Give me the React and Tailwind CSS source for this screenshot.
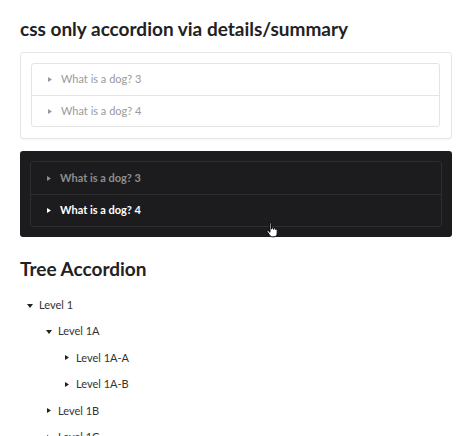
const Tri = ({ open, className }) => (
  <svg width="6" height="7" viewBox="0 0 6 7" className={className}>
    {open ? <path d="M0 2 L6 2 L3 6 Z" fill="currentColor" /> : <path d="M1 1 L5 3.5 L1 6 Z" fill="currentColor" />}
  </svg>
);

const Item = ({ label, dark, active, first }) => (
  <div
    className={`flex items-center pl-[15px] ${dark ? 'h-[32px]' : 'h-[31px]'} ${first ? '' : 'border-t'} ${
      dark ? 'border-[#2e2e31]' : 'border-[#e4e4e4]'
    }`}
  >
    <Tri
      className={`mr-[8px] ${dark ? (active ? 'text-white' : 'text-[#8d8d8d]') : 'text-[#9a9a9a]'}`}
    />
    <span
      className={`text-[11px] ${
        dark ? (active ? 'text-white font-bold' : 'text-[#8d8d8d] font-bold') : 'text-[#9a9a9a]'
      }`}
    >
      {label}
    </span>
  </div>
);

const TreeRow = ({ label, open, indent }) => (
  <div className={`flex items-center h-[26.4px] ${indent}`}>
    <Tri open={open} className="mr-[6px] text-[#222]" />
    <span className="text-[11px] text-[#333]">{label}</span>
  </div>
);

export default function App() {
  return (
    <div className="relative h-[436px] overflow-hidden bg-white pl-5 pr-[22px] pt-[16px] font-['Lato','Liberation_Sans',sans-serif]">
      <h1 className="text-[19px] font-bold text-[#222] leading-[26px]">css only accordion via details/summary</h1>

      {/* light theme accordion */}
      <div className="mt-[10px] border border-[#e6e6e6] rounded-[3px] p-[10px] pb-[11px] shadow-[0_1px_2px_rgba(0,0,0,0.04)]">
        <div className="border border-[#e4e4e4] rounded-[3px] mr-[1px]">
          <Item label="What is a dog? 3" first />
          <Item label="What is a dog? 4" />
        </div>
      </div>

      {/* dark theme accordion */}
      <div className="mt-[12px] bg-[#1c1c1e] rounded-[3px] p-[10px]">
        <div className="border border-[#2e2e31] rounded-[3px]">
          <Item label="What is a dog? 3" dark first />
          <Item label="What is a dog? 4" dark active />
        </div>
      </div>

      <h2 className="mt-[19px] text-[19px] font-bold text-[#222] leading-[26px]">Tree Accordion</h2>

      <div className="mt-[10px] pl-[7px]">
        <TreeRow label="Level 1" open indent="" />
        <TreeRow label="Level 1A" open indent="pl-[19px]" />
        <TreeRow label="Level 1A-A" indent="pl-[37px]" />
        <TreeRow label="Level 1A-B" indent="pl-[37px]" />
        <TreeRow label="Level 1B" indent="pl-[19px]" />
        <TreeRow label="Level 1C" indent="pl-[19px]" />
      </div>

      <svg className="absolute left-[266px] top-[222px]" width="13" height="16" viewBox="0 0 13 16">
        <path
          d="M4 1.5 C4 0.7 5.5 0.7 5.5 1.5 L5.5 7 L6 7 L6 5.8 C6 5 7.5 5 7.5 5.8 L7.5 7.2 L8 7.2 L8 6.3 C8 5.6 9.4 5.6 9.4 6.3 L9.4 7.6 L9.8 7.6 C9.8 6.9 11.2 6.9 11.2 7.6 L11.2 11 C11.2 13 10 14.8 8 14.8 L6.5 14.8 C5 14.8 4.2 14 3.5 13 L1.2 9.6 C0.7 8.9 1.6 8.1 2.3 8.7 L4 10.3 Z"
          fill="white"
          stroke="black"
          strokeWidth="0.9"
        />
      </svg>
    </div>
  );
}
